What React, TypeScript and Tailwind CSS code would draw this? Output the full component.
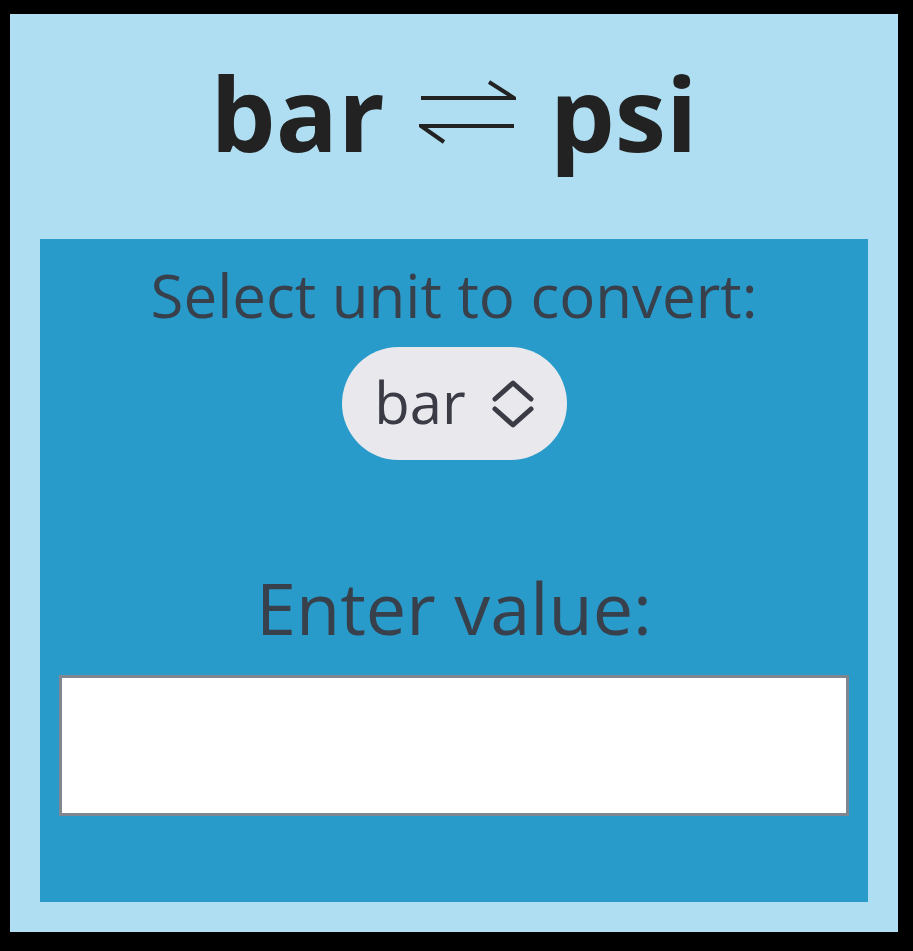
import { useState } from "react";

const units = ["bar", "psi"];

function SwapArrows() {
  return (
    <svg
      width="97"
      height="64"
      viewBox="0 0 97 64"
      fill="none"
      stroke="#222222"
      strokeWidth="4"
      className="mx-[34px] shrink-0"
    >
      <path d="M2 18 H95 L70 2" />
      <path d="M95 46 H2 L25 62" />
    </svg>
  );
}

function Chevrons() {
  return (
    <svg
      width="42"
      height="48"
      viewBox="0 0 42 48"
      fill="none"
      stroke="#3b3b45"
      strokeWidth="5"
      strokeLinecap="round"
      strokeLinejoin="round"
    >
      <path d="M3 19 L21 3 L39 19" />
      <path d="M3 29 L21 45 L39 29" />
    </svg>
  );
}

export default function App() {
  const [unit, setUnit] = useState(0);
  const [value, setValue] = useState("");

  return (
    <div
      className="min-h-screen bg-black pt-[14px] pl-[10px]"
      style={{ fontFamily: '"Open Sans", "Noto Sans", sans-serif' }}
    >
      <div className="w-[888px] h-[918px] bg-[#afdef2] px-[30px] pb-[30px] flex flex-col">
        <h1 className="flex items-center justify-center pt-[46px] h-[225px] pb-[75px] text-[103px] font-bold leading-none text-[#222222]">
          <span>bar</span>
          <SwapArrows />
          <span>psi</span>
        </h1>

        <div className="flex-1 bg-[#289bcb] flex flex-col items-center pt-[26px] px-[19px]">
          <p className="text-[60px] leading-none text-[#38404c]">Select unit to convert:</p>

          <button
            onClick={() => setUnit((u) => (u + 1) % units.length)}
            className="mt-[22px] w-[225px] h-[113px] rounded-full bg-[#e9e9ed] flex items-center justify-center gap-[26px] text-[58px] leading-none text-[#3b3b45]"
          >
            <span className="pb-[4px]">{units[unit]}</span>
            <Chevrons />
          </button>

          <p className="mt-[111px] text-[72px] leading-none text-[#38404c]">Enter value:</p>

          <input
            value={value}
            onChange={(e) => setValue(e.target.value)}
            className="mt-[32px] w-full h-[141px] bg-white border-[3px] border-[#80868f] outline-none px-3 text-[48px]"
          />
        </div>
      </div>
    </div>
  );
}
